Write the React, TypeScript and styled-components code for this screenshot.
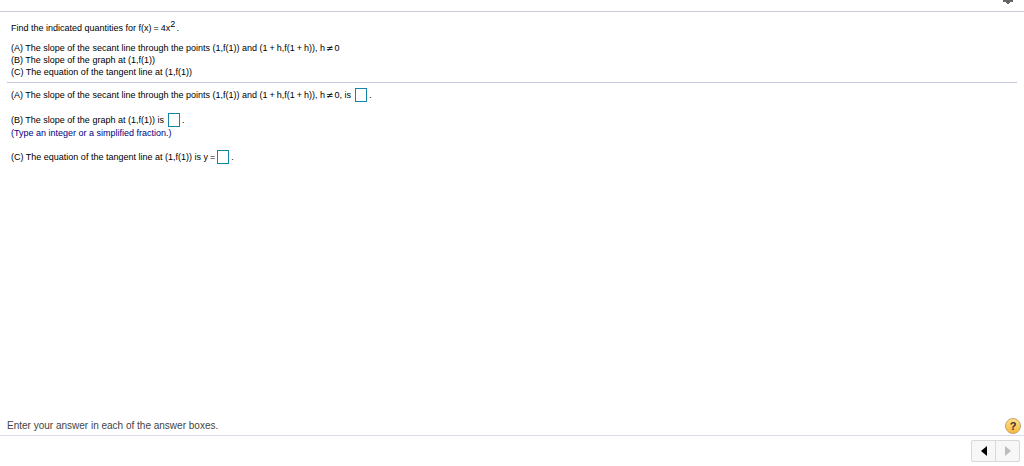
import React from "react";
import styled, { createGlobalStyle } from "styled-components";

const GlobalStyle = createGlobalStyle`
  * { box-sizing: border-box; }
  body {
    margin: 0;
    background: #fff;
    color: #000;
    font-family: "Liberation Sans", Arial, sans-serif;
    font-size: 9px;
    line-height: 12px;
  }
`;

const Page = styled.div`
  display: flex;
  flex-direction: column;
  min-height: 100vh;
`;

const TopBar = styled.header`
  display: flex;
  justify-content: flex-end;
  align-items: flex-start;
  height: 12px;
  padding-right: 10px;
  border-bottom: 1px solid #c9cdd8;
`;

const GearTip = styled.svg`
  display: block;
`;

const Main = styled.main`
  flex: 1;
  padding: 10px 7px 0;
`;

const Prompt = styled.section`
  padding: 0 4px 4px;
  border-bottom: 1px solid #c5cae0;
`;

const Line = styled.p`
  margin: 0;
`;

const Title = styled(Line)`
  margin-bottom: 8px;
`;

const Power = styled.sup`
  font-size: 9px;
  line-height: 0;
  vertical-align: 4px;
`;

const Op = styled.span<{ $gap?: number }>`
  margin: 0 ${(p) => p.$gap ?? 2}px;
`;

const NotEqual = styled.span`
  margin: 0 1px;
  font-family: "DejaVu Sans", sans-serif;
  line-height: 0;
`;

const Answers = styled.section`
  padding: 5px 4px 0;
`;

const Answer = styled.label`
  display: flex;
  align-items: center;
  height: 14px;
  white-space: pre;
`;

const Group = styled.div`
  margin-bottom: 11px;
`;

const Hint = styled(Line)`
  color: #000080;
`;

const Box = styled.input<{ $tight?: boolean }>`
  width: 12px;
  height: 14px;
  margin: 0 2px 0 ${(p) => (p.$tight ? 0 : 4)}px;
  padding: 0;
  border: 1px solid #1584a8;
  border-radius: 0;
  background: #fff;
  font: inherit;
  outline: none;
`;

const StatusBar = styled.div`
  display: flex;
  align-items: center;
  justify-content: space-between;
  height: 20px;
  padding: 0 3px 0 7px;
  color: #444;
  font-size: 10px;
  border-bottom: 1px solid #dcdce8;
`;

const HelpButton = styled.button`
  display: flex;
  align-items: center;
  justify-content: center;
  width: 16px;
  height: 16px;
  padding: 0;
  border: 1px solid #c4a468;
  border-radius: 50%;
  background: linear-gradient(#ffe08a, #f8b93c);
  color: #333;
  font: bold 11px "Liberation Sans", Arial, sans-serif;
`;

const Footer = styled.footer`
  display: flex;
  justify-content: flex-end;
  padding: 4px 4px 4px 0;
`;

const Pager = styled.div`
  display: flex;
  border: 1px solid #d8d8d8;
  border-radius: 2px;
  background: #f7f7f7;
`;

const PagerButton = styled.button`
  display: flex;
  align-items: center;
  justify-content: center;
  width: 23px;
  height: 20px;
  padding: 0;
  border: 0;
  background: transparent;
  color: #000;

  & + & {
    width: 24px;
    border-left: 1px solid #d8d8d8;
  }
  &:disabled {
    color: #bdbdbd;
  }
`;

const Secant = () => (
  <span>
    (A) The slope of the secant line through the points (1,f(1)) and (1<Op>+</Op>h,f(1
    <Op>+</Op>h)), h<NotEqual>≠</NotEqual>0
  </span>
);

export default function App() {
  return (
    <Page>
      <GlobalStyle />
      <TopBar>
        <GearTip width="12" height="4" viewBox="0 0 12 4" aria-hidden="true">
          <path d="M1 0H11V2H8V3H7V4H5V3H4V2H1Z" fill="#666" />
        </GearTip>
      </TopBar>
      <Main>
        <Prompt>
          <Title>
            Find the indicated quantities for f(x)<Op>=</Op>4x<Power>2</Power>
            <Op $gap={1}>.</Op>
          </Title>
          <Line><Secant /></Line>
          <Line>(B) The slope of the graph at (1,f(1))</Line>
          <Line>(C) The equation of the tangent line at (1,f(1))</Line>
        </Prompt>
        <Answers>
          <Group>
            <Answer>
              <span><Secant />, is</span>
              <Box type="text" />.
            </Answer>
          </Group>
          <Group>
            <Answer>
              (B) The slope of the graph at (1,f(1)) is
              <Box type="text" />.
            </Answer>
            <Hint>(Type an integer or a simplified fraction.)</Hint>
          </Group>
          <Answer>
            <span>(C) The equation of the tangent line at (1,f(1)) is y<Op>=</Op></span>
            <Box type="text" $tight />.
          </Answer>
        </Answers>
      </Main>
      <StatusBar>
        <span>Enter your answer in each of the answer boxes.</span>
        <HelpButton type="button" aria-label="Help">?</HelpButton>
      </StatusBar>
      <Footer>
        <Pager>
          <PagerButton type="button" aria-label="Previous">
            <svg width="6" height="10" viewBox="0 0 6 10"><path d="M6 0V10L0 5Z" fill="currentColor" /></svg>
          </PagerButton>
          <PagerButton type="button" aria-label="Next" disabled>
            <svg width="6" height="10" viewBox="0 0 6 10"><path d="M0 0V10L6 5Z" fill="currentColor" /></svg>
          </PagerButton>
        </Pager>
      </Footer>
    </Page>
  );
}
